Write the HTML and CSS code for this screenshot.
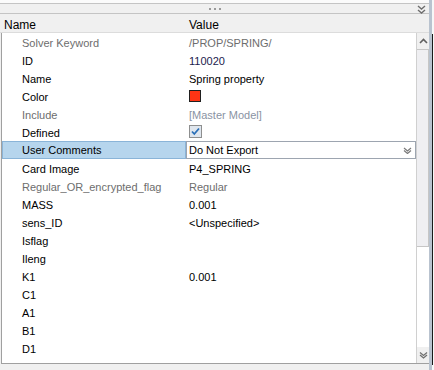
FILE: index.html
```html
<!DOCTYPE html>
<html>
  <head>
    <meta charset="utf-8" />
    <link rel="stylesheet" href="styles.css">
  </head>
  <body>
    <div class="panel">
      <div class="main">
        <div class="top-strip"></div>
        <div class="splitter">
          <span class="grip"><i></i><i></i><i></i></span>
          <svg class="collapse" width="9" height="9" viewBox="0 0 9 9">
            <path d="M1 1 L4.5 4 L8 1 M1 5 L4.5 8 L8 5" fill="none" stroke="#6e6e6e" stroke-width="1.4"/>
          </svg>
        </div>
        <div class="table">
          <div class="head">
            <span class="col-name">Name</span>
            <span class="col-value">Value</span>
          </div>
          <div class="body">
            <div class="rows">
              <div class="row muted"><span class="name">Solver Keyword</span><span class="value">/PROP/SPRING/</span></div>
              <div class="row"><span class="name">ID</span><span class="value id">110020</span></div>
              <div class="row"><span class="name">Name</span><span class="value">Spring property</span></div>
              <div class="row"><span class="name">Color</span><span class="value"><span class="swatch"></span></span></div>
              <div class="row muted"><span class="name">Include</span><span class="value link">[Master Model]</span></div>
              <div class="row"><span class="name">Defined</span><span class="value">
                <span class="check">
                  <svg width="11" height="11" viewBox="0 0 11 11"><path d="M2 5.5 L4.3 8 L9 2.5" fill="none" stroke="#2a6fb8" stroke-width="1.8"/></svg>
                </span>
              </span></div>
              <div class="row selected"><span class="name">User Comments</span><span class="value combo">Do Not Export
                <svg class="combo-arrow" width="9" height="7" viewBox="0 0 9 7"><path d="M1 1 L4.5 4 L8 1 M1 3.5 L4.5 6.5 L8 3.5" fill="none" stroke="#7a7a7a" stroke-width="1.2"/></svg>
              </span></div>
              <div class="row"><span class="name">Card Image</span><span class="value">P4_SPRING</span></div>
              <div class="row muted"><span class="name">Regular_OR_encrypted_flag</span><span class="value">Regular</span></div>
              <div class="row"><span class="name">MASS</span><span class="value">0.001</span></div>
              <div class="row"><span class="name">sens_ID</span><span class="value">&lt;Unspecified&gt;</span></div>
              <div class="row"><span class="name">Isflag</span><span class="value"></span></div>
              <div class="row"><span class="name">Ileng</span><span class="value"></span></div>
              <div class="row"><span class="name">K1</span><span class="value">0.001</span></div>
              <div class="row"><span class="name">C1</span><span class="value"></span></div>
              <div class="row"><span class="name">A1</span><span class="value"></span></div>
              <div class="row"><span class="name">B1</span><span class="value"></span></div>
              <div class="row"><span class="name">D1</span><span class="value"></span></div>
              <div class="row"><span class="name">IsoflDriv</span><span class="value"></span></div>
            </div>
            <div class="vscroll">
              <div class="arrow">
                <svg width="9" height="6" viewBox="0 0 9 6"><path d="M1 5 L4.5 1.5 L8 5" fill="none" stroke="#606060" stroke-width="1.6"/></svg>
              </div>
              <div class="thumb"></div>
              <div class="track"></div>
              <div class="arrow">
                <svg width="9" height="8" viewBox="0 0 9 8"><path d="M1 1.5 L4.5 4.5 L8 1.5 M1 4 L4.5 7 L8 4" fill="none" stroke="#707070" stroke-width="1.3"/></svg>
              </div>
            </div>
          </div>
        </div>
        <div class="bottom"></div>
      </div>
      <div class="edge"><div class="edge-line"></div></div>
    </div>
  </body>
</html>
```

FILE: styles.css
```css
/* Property table panel */
body {
  margin: 0;
  background-color: #f0f0f0;
  font-family: "Liberation Sans", Arial, sans-serif;
  font-size: 11px;
  color: #000000;
}

.panel {
  display: flex;
  width: 434px;
  height: 370px;
  overflow: hidden;
  background-color: #f0f0f0;
}

.main {
  width: 429px;
  display: flex;
  flex-direction: column;
}

.edge {
  width: 5px;
  border-left: 3px solid #b9c3cf;
  box-sizing: border-box;
  background-color: #f7f7f7;
}

.edge-line {
  margin-top: 34px;
  height: 331px;
  width: 1px;
  background-color: #1a1a1a;
}

.top-strip {
  height: 3px;
  background-color: #fbfbfb;
  border-bottom: 1px solid #c4c4c4;
}

.splitter {
  height: 9px;
  display: flex;
  align-items: center;
  justify-content: center;
  position: relative;
  border-bottom: 1px solid #c4c4c4;
}

.grip {
  display: flex;
  gap: 3px;
}

.grip i {
  width: 2px;
  height: 2px;
  background-color: #9a9a9a;
}

.collapse {
  position: absolute;
  right: 3px;
  top: 1px;
}

.table {
  flex: 1;
  display: flex;
  flex-direction: column;
}

.head {
  height: 19px;
  display: flex;
  align-items: flex-start;
  padding-top: 4px;
  box-sizing: border-box;
  border-bottom: 1px solid #dcdcdc;
  font-size: 12px;
  line-height: 14px;
}

.col-name {
  width: 185px;
  padding-left: 4px;
}

.body {
  height: 330px;
  display: flex;
  background-color: #ffffff;
  border-left: 1px solid #a0a0a0;
  border-bottom: 1px solid #a0a0a0;
  margin-left: 1px;
}

.rows {
  width: 415px;
  overflow: hidden;
}

.row {
  height: 18px;
  display: flex;
  align-items: center;
}

.name {
  width: 164px;
  padding-left: 20px;
  height: 18px;
  line-height: 20px;
  white-space: nowrap;
}

.value {
  flex: 1;
  padding-left: 3px;
  padding-top: 2px;
  box-sizing: border-box;
  height: 18px;
  display: flex;
  align-items: center;
  white-space: nowrap;
}

.muted .name,
.muted .value {
  color: #6d6d6d;
}

.muted .link {
  color: #8a93a3;
}

.id {
  color: #1c1c4e;
}

.swatch {
  width: 10px;
  height: 10px;
  margin-top: -2px;
  background-color: #ff3414;
  border: 1px solid #202020;
}

.check {
  width: 11px;
  height: 11px;
  margin-top: -4px;
  border: 1px solid #8e8f8f;
  background-color: #dfe6ee;
  display: flex;
}

.selected .name {
  background-color: #b6d5ed;
  box-shadow: inset 0 0 0 1px #8ab4d8;
  height: 18px;
  line-height: 18px;
}

.combo {
  position: relative;
  border: 1px solid #9da5b0;
  padding-top: 0;
  padding-left: 2px;
  color: #000000;
}

.combo-arrow {
  position: absolute;
  right: 3px;
  top: 5px;
}

.vscroll {
  width: 12px;
  display: flex;
  flex-direction: column;
  border-left: 1px solid #d0d0d0;
}

.arrow {
  height: 16px;
  display: flex;
  align-items: center;
  justify-content: center;
  background-color: #f0f0f0;
}

.thumb {
  height: 196px;
  background-color: #efeff2;
  border: 1px solid #c6c6c6;
  border-left: none;
}

.track {
  flex: 1;
  background-color: #ffffff;
}

.bottom {
  flex: 1;
}
```
